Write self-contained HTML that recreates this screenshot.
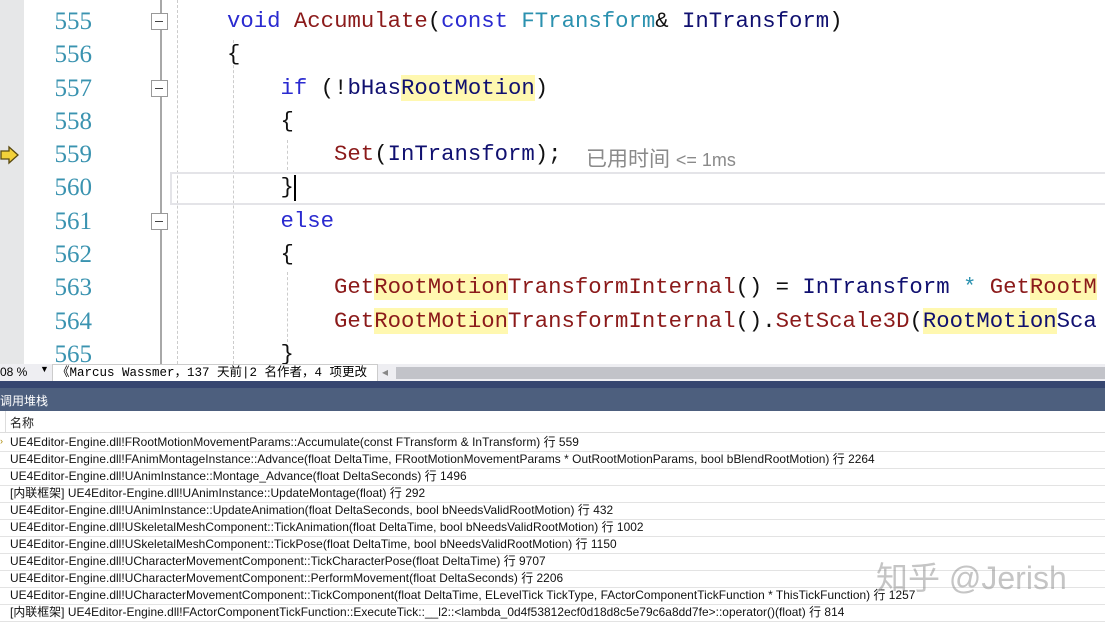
<!DOCTYPE html>
<html><head><meta charset="utf-8"><style>
*{margin:0;padding:0;box-sizing:border-box}
body{width:1105px;height:623px;overflow:hidden;background:#fff;position:relative;font-family:"Liberation Sans","Noto Sans CJK SC",sans-serif}
.lm{position:absolute;left:0;top:0;width:24px;height:364px;background:#e6e7e8}
.ln{position:absolute;left:36px;width:56px;text-align:right;font-family:"Liberation Serif","Noto Serif CJK SC",serif;font-size:25px;color:#3a93b0;line-height:33.3px}
.code{position:absolute;left:0;font-family:"Liberation Mono","Noto Sans CJK SC",monospace;font-size:22.3px;line-height:33.3px;white-space:pre;color:#111}
.k{color:#2a2ad0}.f{color:#8b1a1a}.t{color:#2b91af}.v{color:#101070}.h{background:#fff8b0}
.fold{position:absolute;left:151px;width:17px;height:17px;border:1.5px solid #999;background:#fff}
.fold:after{content:"";position:absolute;left:3px;top:6.5px;width:8px;height:1.5px;background:#444}
.st{position:absolute;top:364px;left:0;width:1105px;height:18px;background:#eeeef2;font-size:12px}
.hd{position:absolute;top:381px;left:0;width:1105px;height:30px;background:#4d5f7e;border-top:7px solid #364670;color:#fff;font-size:12px}
.row{position:absolute;left:10px;font-size:11.9px;letter-spacing:0.05px;color:#111;line-height:17px;white-space:pre}
.sep{position:absolute;left:0;width:1105px;height:1px;background:#e3e3e3}
</style></head><body>
<div class="lm"></div>
<svg style="position:absolute;left:0;top:145px" width="20" height="20"><path d="M1 6 H9 V2 L18 10 L9 18 V14 H1 Z" fill="#f2d13a" stroke="#5a4a10" stroke-width="1.3"/></svg>
<div style="position:absolute;left:160px;top:0;width:2px;height:364px;background:#a8a8a8"></div>
<div style="position:absolute;left:177px;top:0;width:0;height:364px;border-left:1px dashed #ccc"></div>
<div style="position:absolute;left:233px;top:40px;width:0;height:324px;border-left:1px dashed #ccc"></div>
<div style="position:absolute;left:287px;top:140px;width:0;height:30px;border-left:1px dashed #ccc"></div>
<div style="position:absolute;left:287px;top:272px;width:0;height:70px;border-left:1px dashed #ccc"></div>
<div style="position:absolute;left:170px;top:172px;width:940px;height:33px;border:2px solid #e4e4e8;border-right:none"></div>
<div class="fold" style="top:13px"></div>
<div class="fold" style="top:80px"></div>
<div class="fold" style="top:213px"></div>
<div class="ln" style="top:5px">555<br>556<br>557<br>558<br>559<br>560<br>561<br>562<br>563<br>564<br>565</div>
<div class="code" style="top:5px;left:227px"><span class="k">void</span> <span class="f">Accumulate</span>(<span class="k">const</span> <span class="t">FTransform</span>&amp; <span class="v">InTransform</span>)
{
    <span class="k">if</span> (!<span class="v">bHas<span class="h">RootMotion</span></span>)
    {
        <span class="f">Set</span>(<span class="v">InTransform</span>);
    }<span style="display:inline-block;width:2px;height:26px;background:#000;vertical-align:middle"></span>
    <span class="k">else</span>
    {
        <span class="f">Get<span class="h">RootMotion</span>TransformInternal</span>() = <span class="v">InTransform</span> <span class="t">*</span> <span class="f">Get<span class="h">RootM</span></span>
        <span class="f">Get<span class="h">RootMotion</span>TransformInternal</span>().<span class="f">SetScale3D</span>(<span class="v"><span class="h">RootMotion</span>Sca</span>
    }</div>
<div style="position:absolute;left:586px;top:143px;font-size:21px;color:#8a8a8a;font-family:'Liberation Sans','Noto Sans CJK SC',sans-serif">已用时间 <span style="font-size:18px">&lt;= 1ms</span></div>
<div class="st"><span style="position:absolute;left:0;top:1px">08 %</span><span style="position:absolute;left:40px;top:0;font-size:9px">▼</span>
<div style="position:absolute;left:52px;top:0;width:326px;height:18px;background:#fff;border:1px solid #ccc;font-family:'Liberation Mono','Noto Sans CJK SC',monospace;font-size:12.5px;line-height:16px;padding-left:4px;white-space:nowrap;overflow:hidden">《Marcus Wassmer，137 天前|2 名作者，4 项更改</div>
<span style="position:absolute;left:382px;top:1px;color:#888">◂</span>
<div style="position:absolute;left:396px;top:3px;width:709px;height:12px;background:#c2c3c9"></div></div>
<div class="hd"><span style="position:absolute;left:0;top:4px">调用堆栈</span></div>
<div style="position:absolute;left:0;top:411px;width:1105px;height:22px;background:#fff;border-bottom:1px solid #ddd;font-size:12px"><span style="position:absolute;left:10px;top:3px;color:#222">名称</span><div style="position:absolute;left:5px;top:0;width:1px;height:22px;background:#ddd"></div></div>
<div style="position:absolute;left:0;top:436px;font-size:9px;color:#aa8800">›</div>
<div class="row" style="top:434px">UE4Editor-Engine.dll!FRootMotionMovementParams::Accumulate(const FTransform &amp; InTransform) 行 559</div>
<div class="row" style="top:451px">UE4Editor-Engine.dll!FAnimMontageInstance::Advance(float DeltaTime, FRootMotionMovementParams * OutRootMotionParams, bool bBlendRootMotion) 行 2264</div>
<div class="row" style="top:468px">UE4Editor-Engine.dll!UAnimInstance::Montage_Advance(float DeltaSeconds) 行 1496</div>
<div class="row" style="top:485px">[内联框架] UE4Editor-Engine.dll!UAnimInstance::UpdateMontage(float) 行 292</div>
<div class="row" style="top:502px">UE4Editor-Engine.dll!UAnimInstance::UpdateAnimation(float DeltaSeconds, bool bNeedsValidRootMotion) 行 432</div>
<div class="row" style="top:519px">UE4Editor-Engine.dll!USkeletalMeshComponent::TickAnimation(float DeltaTime, bool bNeedsValidRootMotion) 行 1002</div>
<div class="row" style="top:536px">UE4Editor-Engine.dll!USkeletalMeshComponent::TickPose(float DeltaTime, bool bNeedsValidRootMotion) 行 1150</div>
<div class="row" style="top:553px">UE4Editor-Engine.dll!UCharacterMovementComponent::TickCharacterPose(float DeltaTime) 行 9707</div>
<div class="row" style="top:570px">UE4Editor-Engine.dll!UCharacterMovementComponent::PerformMovement(float DeltaSeconds) 行 2206</div>
<div class="row" style="top:587px">UE4Editor-Engine.dll!UCharacterMovementComponent::TickComponent(float DeltaTime, ELevelTick TickType, FActorComponentTickFunction * ThisTickFunction) 行 1257</div>
<div class="row" style="top:604px">[内联框架] UE4Editor-Engine.dll!FActorComponentTickFunction::ExecuteTick::__l2::&lt;lambda_0d4f53812ecf0d18d8c5e79c6a8dd7fe&gt;::operator()(float) 行 814</div>
<div class="sep" style="top:451px"></div><div class="sep" style="top:468px"></div><div class="sep" style="top:485px"></div><div class="sep" style="top:502px"></div><div class="sep" style="top:519px"></div><div class="sep" style="top:536px"></div><div class="sep" style="top:553px"></div><div class="sep" style="top:570px"></div><div class="sep" style="top:587px"></div><div class="sep" style="top:604px"></div><div class="sep" style="top:621px"></div>
<div style="position:absolute;left:876px;top:553px;font-size:32px;color:rgba(150,150,150,0.55);font-family:'Liberation Sans','Noto Sans CJK SC',sans-serif;white-space:nowrap">知乎 @Jerish</div>
</body></html>
